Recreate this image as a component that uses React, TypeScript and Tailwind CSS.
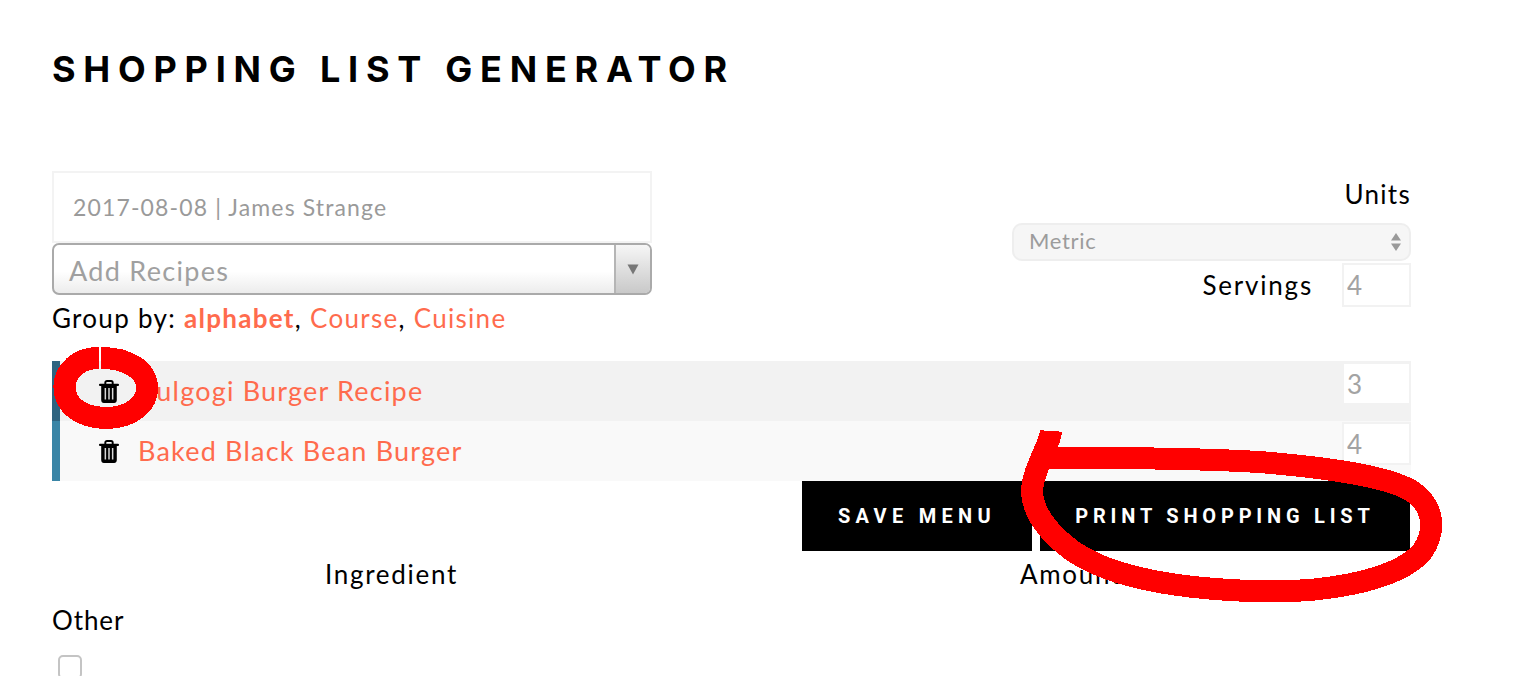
const body = "font-['Lato','Liberation_Sans',sans-serif]";

function Trash() {
  return (
    <svg width="20" height="23" viewBox="0 0 20 23" className="shrink-0">
      <path d="M6.3 4.5V2.6C6.3 1.6 7 1 8 1h4c1 0 1.700.6 1.700 1.600V4.500" fill="none" stroke="#000" strokeWidth="1.900" />
      <rect x="0" y="3.800" width="20" height="2.200" rx="1" fill="#000" />
      <path d="M2.200 5h15.600v15c0 1.700-1.100 3-2.600 3H4.800c-1.500 0-2.600-1.300-2.600-3z" fill="#000" />
      <path d="M5.600 8h1.500v11.500H5.600zM9.250 8h1.500v11.500h-1.500zM12.900 8h1.500v11.500h-1.500z" fill="#d8d8d8" />
    </svg>
  );
}

function Row({ name, qty, tone, bar }: { name: string; qty: string; tone: string; bar: string }) {
  return (
    <div className={`flex h-[60px] border-l-8 ${tone} ${bar}`}>
      <div className="flex h-[60px] flex-1 items-center pl-[39px]">
        <Trash />
        <a className="ml-[19px] pt-px text-[27px] tracking-[1.2px] text-[#ff6b4d]">{name}</a>
      </div>
      <input
        readOnly
        value={qty}
        className="mt-px h-[43px] w-[69px] border-2 border-[#f2f2f2] bg-white pl-[3px] text-[26px] text-[#a3a3a3] outline-none"
      />
    </div>
  );
}

export default function App() {
  return (
    <div className={`relative h-[676px] w-[1522px] overflow-hidden bg-white pl-[52px] pr-[111px] text-black ${body}`}>
      <h1 className="pt-[47px] font-['Inter',sans-serif] text-[36px] leading-[44px] font-bold tracking-[7.77px] whitespace-nowrap">
        SHOPPING LIST GENERATOR
      </h1>

      <div className="mt-[36px] flex h-[236px] justify-between pt-[44px]">
        <div className="w-[600px]">
          <div className="flex h-[72px] items-center border-2 border-[#f3f3f3] pl-[19px] text-[23px] tracking-[1.13px] text-[#9a9a9a]">
            2017-08-08 | James Strange
          </div>
          <div className="flex h-[52px] items-center overflow-hidden rounded-[7px] border-2 border-[#aaaaaa] bg-linear-to-b from-white from-55% to-[#ececec]">
            <span className="flex-1 pt-[5px] pl-[15px] text-[27px] tracking-[1.3px] text-[#a0a0a0]">Add Recipes</span>
            <span className="flex h-full w-[36px] items-center justify-center border-l-2 border-[#b5b5b5] bg-linear-to-b from-[#f6f6f6] to-[#c9c9c9]">
              <svg width="12" height="11" viewBox="0 0 12 11"><path d="M0.500 0.500h11L6 10.500z" fill="#777" /></svg>
            </span>
          </div>
          <p className="mt-[6px] text-[26px] leading-[34px] tracking-[1.3px]">
            Group by: <a className="font-bold text-[#ff6b4d]">alphabet</a>, <a className="text-[#ff6b4d]">Course</a>,{" "}
            <a className="text-[#ff6b4d]">Cuisine</a>
          </p>
        </div>

        <div className="flex w-[399px] flex-col items-end">
          <div className="mt-[6px] text-[26px] leading-[34px] tracking-[1.3px]">Units</div>
          <div className="mt-[12px] flex h-[38px] w-full items-center justify-between rounded-[10px] border-2 border-[#eeeeee] bg-[#f6f6f6] pr-[8px] pl-[15px] text-[22px] tracking-[0.7px] text-[#9c9c9c]">
            <span className="pb-[4px]">Metric</span>
            <svg width="10" height="18" viewBox="0 0 10 18"><path d="M5 0l5 7.500H0zM5 18l5-7.500H0z" fill="#9a9a9a" /></svg>
          </div>
          <div className="mt-[2px] flex items-center">
            <span className="mr-[29px] text-[26px] tracking-[1.800px]">Servings</span>
            <input
              readOnly
              value="4"
              className="h-[44px] w-[69px] border-2 border-[#f2f2f2] bg-white pl-[3px] text-[26px] text-[#a3a3a3] outline-none"
            />
          </div>
        </div>
      </div>

      <div className="-mt-[2px]">
        <Row name="Bulgogi Burger Recipe" qty="3" tone="bg-[#f2f2f2]" bar="border-[#2f6480]" />
        <Row name="Baked Black Bean Burger" qty="4" tone="bg-[#f9f9f9]" bar="border-[#3a85a6]" />
      </div>

      <div className="flex justify-end gap-[8px] pr-px font-['Roboto',sans-serif] text-[20px] font-bold text-white">
        <button className="h-[70px] w-[230px] bg-black text-center tracking-[5.300px] whitespace-nowrap">SAVE MENU</button>
        <button className="h-[70px] w-[370px] bg-black text-center tracking-[4.800px] whitespace-nowrap">PRINT SHOPPING LIST</button>
      </div>

      <div className="relative mt-[5px] flex h-[36px] items-center text-[26px] tracking-[1.700px]">
        <span className="ml-[273px]">Ingredient</span>
        <span className="ml-[562px]">Amount</span>
      </div>
      <div className="mt-[11px] text-[26px] leading-[34px] tracking-[0.9px]">Other</div>
      <input type="checkbox" readOnly className="mt-[18px] ml-[6px] block h-[24px] w-[24px] appearance-none rounded-[5px] border-2 border-[#c4c4c4] bg-white" />

      <svg className="pointer-events-none absolute top-0 left-0" width="1522" height="676" shapeRendering="crispEdges" fill="none" stroke="#ff0000" strokeWidth="22">
        <path d="M99 358C74 358 62 376 65 393C70 411 88 418 108 418C132 417 147 404 147 388C147 370 128 358 101 358" />
        <path d="M1051 431C1050 446 1032 470 1032 492C1033 512 1048 532 1070 549C1105 575 1170 588 1250 591C1320 594 1395 582 1422 552C1437 530 1434 505 1410 490C1385 476 1330 468 1260 462C1190 458 1120 458 1042 458" />
      </svg>
    </div>
  );
}
